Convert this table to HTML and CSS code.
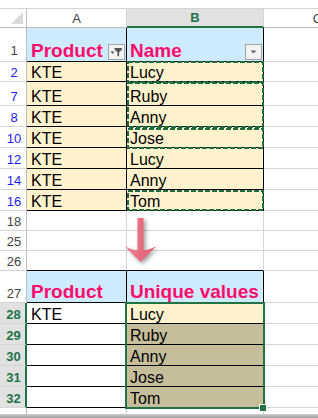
FILE: index.html
```html
<!DOCTYPE html>
<html>
<head>
<meta charset="utf-8">
<link rel="stylesheet" href="styles.css">
</head>
<body>
<div class="page">
  <div class="sheet">
    <div class="c corner"><span class="tri"></span></div>
    <div class="c hd">A</div>
    <div class="c hd sel">B</div>
    <div class="c hd">C</div>

    <div class="c rh r1">1</div>
    <div class="c th a"><span class="tt">Product</span>
      <svg class="fbtn" width="17" height="16" viewBox="0 0 17 16"><rect x="0.5" y="0.5" width="16" height="15" fill="#f3f3f3" stroke="#a3a3a3"/><path d="M2.5 7.5h4l-2 2.5z" fill="#555"/><path d="M6.5 4h7.5v1.4l-2.9 2.9v3.9h-1.6v-3.9L6.5 5.4z" fill="#555"/></svg>
    </div>
    <div class="c th b"><span class="tt">Name</span>
      <svg class="fbtn" width="17" height="16" viewBox="0 0 17 16"><rect x="0.5" y="0.5" width="16" height="15" fill="#f3f3f3" stroke="#a3a3a3"/><path d="M5.5 6.5h6l-3 3z" fill="#666"/></svg>
    </div>
    <div class="c g"></div>

    <div class="c rh flt">2</div>
    <div class="c d y a">KTE</div>
    <div class="c d y b">Lucy</div>
    <div class="c g"></div>

    <div class="c rh flt">7</div>
    <div class="c d y a">KTE</div>
    <div class="c d y b">Ruby</div>
    <div class="c g"></div>

    <div class="c rh flt">8</div>
    <div class="c d y a">KTE</div>
    <div class="c d y b">Anny</div>
    <div class="c g"></div>

    <div class="c rh flt">10</div>
    <div class="c d y a">KTE</div>
    <div class="c d y b">Jose</div>
    <div class="c g"></div>

    <div class="c rh flt">12</div>
    <div class="c d y a">KTE</div>
    <div class="c d y b">Lucy</div>
    <div class="c g"></div>

    <div class="c rh flt">14</div>
    <div class="c d y a">KTE</div>
    <div class="c d y b">Anny</div>
    <div class="c g"></div>

    <div class="c rh flt">16</div>
    <div class="c d y a">KTE</div>
    <div class="c d y b">Tom</div>
    <div class="c g"></div>

    <div class="c rh">18</div>
    <div class="c g"></div>
    <div class="c g"></div>
    <div class="c g"></div>

    <div class="c rh">25</div>
    <div class="c g"></div>
    <div class="c g"></div>
    <div class="c g"></div>

    <div class="c rh">26</div>
    <div class="c g bb"></div>
    <div class="c g bb"></div>
    <div class="c g"></div>

    <div class="c rh">27</div>
    <div class="c th a"><span class="tt">Product</span></div>
    <div class="c th b"><span class="tt">Unique values</span></div>
    <div class="c g"></div>

    <div class="c rh rs">28</div>
    <div class="c d w a">KTE</div>
    <div class="c d y b">Lucy</div>
    <div class="c g"></div>

    <div class="c rh rs">29</div>
    <div class="c d w a"></div>
    <div class="c d t b">Ruby</div>
    <div class="c g"></div>

    <div class="c rh rs">30</div>
    <div class="c d w a"></div>
    <div class="c d t b">Anny</div>
    <div class="c g"></div>

    <div class="c rh rs">31</div>
    <div class="c d w a"></div>
    <div class="c d t b">Jose</div>
    <div class="c g"></div>

    <div class="c rh rs">32</div>
    <div class="c d w a"></div>
    <div class="c d t b">Tom</div>
    <div class="c g"></div>

    <div class="c rh">33</div>
    <div class="c g"></div>
    <div class="c g"></div>
    <div class="c g"></div>

    <svg class="ants" width="318" height="406" viewBox="0 8 318 406">
      <g fill="none" stroke="#1d6b40" stroke-width="2" stroke-dasharray="5 2" shape-rendering="crispEdges">
        <rect x="128" y="62" width="135" height="20"/>
        <rect x="128" y="83" width="135" height="44"/>
        <rect x="128" y="129" width="135" height="19"/>
        <rect x="128" y="191" width="135" height="19"/>
      </g>
    </svg>

    <svg class="arrow" width="46" height="56" viewBox="120 214 46 56">
      <defs>
        <linearGradient id="ag" x1="0" y1="0" x2="1" y2="0">
          <stop offset="0" stop-color="#ef7e90"/>
          <stop offset="1" stop-color="#e15a70"/>
        </linearGradient>
      </defs>
      <path d="M137.5 218H143.5V250.5C148 250 152 248.5 156.5 246L140.5 262L124.5 246C129 248.5 133 250 137.5 250.5Z" fill="url(#ag)"/>
    </svg>

    <div class="selbox"></div>
    <div class="handle"></div>
  </div>
  <div class="shade"></div>
</div>
</body>
</html>
```

FILE: styles.css
```css
html, body {
  margin: 0;
  padding: 0;
  background: #ffffff;
}

.page {
  width: 318px;
  height: 418px;
  overflow: hidden;
  display: flex;
  flex-direction: column;
  font-family: "Liberation Sans", Arial, sans-serif;
}

.sheet {
  position: relative;
  margin-top: 8px;
  height: 406px;
  overflow: hidden;
  display: grid;
  grid-template-columns: 27px 100px 137px 108px;
  grid-template-rows: 20px 34px 20px 24px 21px 21px 21px 21px 21px 20px 20px 20px 32px 21px 21px 21px 21px 21px 20px;
}

.c {
  box-sizing: border-box;
  border-right: 1px solid #d4d4d4;
  border-bottom: 1px solid #d4d4d4;
  display: flex;
  align-items: flex-end;
  overflow: hidden;
  white-space: nowrap;
  background: #ffffff;
}

.corner {
  justify-content: flex-end;
  border-top: 1px solid #d4d4d4;
  border-right-color: #bdbdbd;
  border-bottom-color: #bdbdbd;
  padding: 0 3px 3px 0;
}

.tri {
  width: 12px;
  height: 12px;
  background: #dadada;
  clip-path: polygon(100% 0, 100% 100%, 0 100%);
}

.hd {
  justify-content: center;
  align-items: center;
  border-top: 1px solid #d4d4d4;
  border-bottom-color: #bdbdbd;
  font-size: 13px;
  color: #444444;
}

.hd.sel {
  background: #e1e1e1;
  color: #217346;
  font-weight: bold;
  border-bottom: 2px solid #217346;
}

.rh {
  justify-content: center;
  padding: 0 0 2px 2px;
  font-size: 13px;
  line-height: 13px;
  color: #444444;
  border-right-color: #bdbdbd;
}

.rh.r1 {
  padding-bottom: 4px;
}

.rh.flt {
  color: #1c1cff;
}

.rh.rs {
  background: #e1e1e1;
  color: #217346;
  font-weight: bold;
  border-right: 2px solid #217346;
}

.th {
  background: #cdebfc;
  border-right-color: #000000;
  border-bottom-color: #000000;
  justify-content: space-between;
  font-size: 19px;
  font-weight: bold;
  color: #fe0b6c;
}

.th .tt {
  line-height: 19px;
  padding-bottom: 1px;
}

.a {
  padding-left: 4px;
}

.b {
  padding-left: 3px;
}

.fbtn {
  display: block;
  margin: 0 1px 1px 0;
  flex: none;
}

.d {
  font-size: 16px;
  line-height: 16px;
  color: #000000;
  border-right-color: #000000;
  border-bottom-color: #000000;
}

.y {
  background: #fff2cc;
}

.t {
  background: #c6be9b;
}

.w {
  background: #ffffff;
}

.bb {
  border-bottom-color: #000000;
}

.ants {
  position: absolute;
  left: 0;
  top: 0;
  pointer-events: none;
}

.arrow {
  position: absolute;
  left: 120px;
  top: 206px;
  filter: drop-shadow(2px 2px 2px rgba(0, 0, 0, 0.4));
}

.selbox {
  position: absolute;
  left: 125px;
  top: 294px;
  width: 140px;
  height: 107px;
  box-sizing: border-box;
  border: 2px solid #217346;
}

.handle {
  position: absolute;
  left: 259px;
  top: 396px;
  width: 6px;
  height: 6px;
  background: #217346;
  border: 1px solid #ffffff;
}

.shade {
  height: 4px;
  background: linear-gradient(#d0d0d0, #9c9c9c);
}
```
